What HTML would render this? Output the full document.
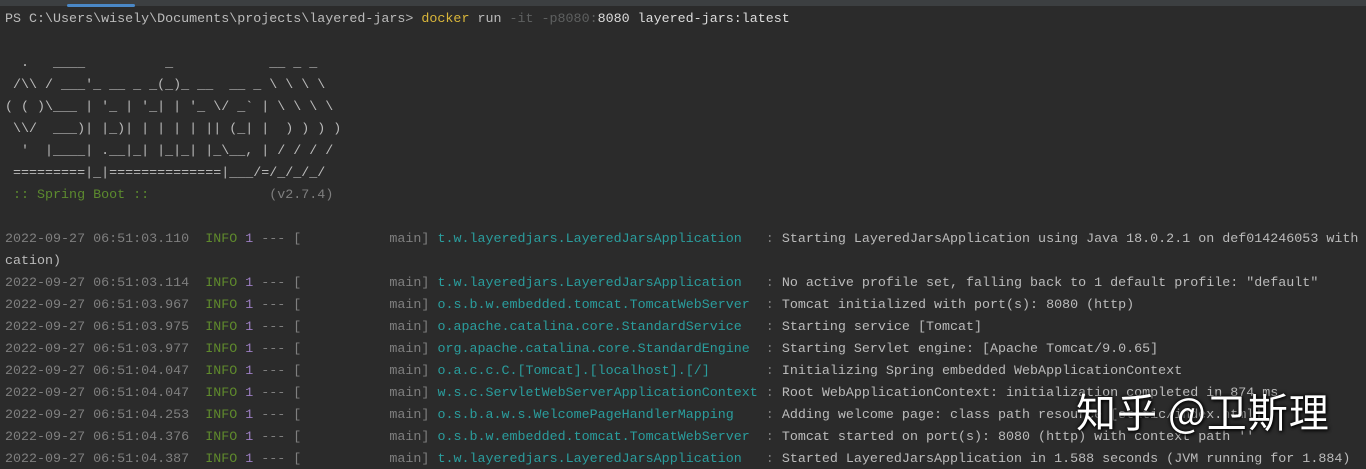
<!DOCTYPE html>
<html><head><meta charset="utf-8"><style>
html,body{margin:0;padding:0;background:#2b2b2b;width:1366px;height:469px;overflow:hidden;position:relative}
.top{position:absolute;left:0;top:0;width:1366px;height:6px;background:#3c3f41}
.tab{position:absolute;left:67px;top:4px;width:68px;height:3px;background:#4a88c7;border-radius:2px}
pre{position:absolute;left:5px;top:9px;margin:0;font-family:"Liberation Mono",monospace;font-size:13.35px;line-height:22px;color:#bbbbbb;white-space:pre}
.g{color:#7f7f7f}.y{color:#d9b63a}.i{color:#5f8a2c}.p{color:#9d7fc4}.c{color:#2a9d9d}.sb{color:#5c8a2e}.d{color:#5e6060}
.wm{position:absolute;left:1076px;top:382px;font-family:"Noto Sans CJK SC",sans-serif;font-size:40px;color:#fff;text-shadow:0 0 4px #000,1px 1px 3px #000;line-height:56px;letter-spacing:1px}
</style></head><body>
<div class="top"></div><div class="tab"></div>
<pre>PS C:\Users\wisely\Documents\projects\layered-jars&gt; <span class="y">docker</span> run <span class="d">-it -p8080:</span><span style="color:#ddd">8080 layered-jars:latest</span>

  .   ____          _            __ _ _
 /\\ / ___'_ __ _ _(_)_ __  __ _ \ \ \ \
( ( )\___ | '_ | '_| | '_ \/ _` | \ \ \ \
 \\/  ___)| |_)| | | | | || (_| |  ) ) ) )
  '  |____| .__|_| |_|_| |_\__, | / / / /
 =========|_|==============|___/=/_/_/_/
<span class="sb"> :: Spring Boot :: </span><span class="g">              (v2.7.4)</span>

<span class="g">2022-09-27 06:51:03.110 </span> <span class="i">INFO</span> <span class="p">1</span> <span class="g">--- [           main]</span> <span class="c">t.w.layeredjars.LayeredJarsApplication  </span> <span class="g">:</span> Starting LayeredJarsApplication using Java 18.0.2.1 on def014246053 with
cation)
<span class="g">2022-09-27 06:51:03.114 </span> <span class="i">INFO</span> <span class="p">1</span> <span class="g">--- [           main]</span> <span class="c">t.w.layeredjars.LayeredJarsApplication  </span> <span class="g">:</span> No active profile set, falling back to 1 default profile: "default"
<span class="g">2022-09-27 06:51:03.967 </span> <span class="i">INFO</span> <span class="p">1</span> <span class="g">--- [           main]</span> <span class="c">o.s.b.w.embedded.tomcat.TomcatWebServer </span> <span class="g">:</span> Tomcat initialized with port(s): 8080 (http)
<span class="g">2022-09-27 06:51:03.975 </span> <span class="i">INFO</span> <span class="p">1</span> <span class="g">--- [           main]</span> <span class="c">o.apache.catalina.core.StandardService  </span> <span class="g">:</span> Starting service [Tomcat]
<span class="g">2022-09-27 06:51:03.977 </span> <span class="i">INFO</span> <span class="p">1</span> <span class="g">--- [           main]</span> <span class="c">org.apache.catalina.core.StandardEngine </span> <span class="g">:</span> Starting Servlet engine: [Apache Tomcat/9.0.65]
<span class="g">2022-09-27 06:51:04.047 </span> <span class="i">INFO</span> <span class="p">1</span> <span class="g">--- [           main]</span> <span class="c">o.a.c.c.C.[Tomcat].[localhost].[/]      </span> <span class="g">:</span> Initializing Spring embedded WebApplicationContext
<span class="g">2022-09-27 06:51:04.047 </span> <span class="i">INFO</span> <span class="p">1</span> <span class="g">--- [           main]</span> <span class="c">w.s.c.ServletWebServerApplicationContext</span> <span class="g">:</span> Root WebApplicationContext: initialization completed in 874 ms
<span class="g">2022-09-27 06:51:04.253 </span> <span class="i">INFO</span> <span class="p">1</span> <span class="g">--- [           main]</span> <span class="c">o.s.b.a.w.s.WelcomePageHandlerMapping   </span> <span class="g">:</span> Adding welcome page: class path resource [static/index.html]
<span class="g">2022-09-27 06:51:04.376 </span> <span class="i">INFO</span> <span class="p">1</span> <span class="g">--- [           main]</span> <span class="c">o.s.b.w.embedded.tomcat.TomcatWebServer </span> <span class="g">:</span> Tomcat started on port(s): 8080 (http) with context path ''
<span class="g">2022-09-27 06:51:04.387 </span> <span class="i">INFO</span> <span class="p">1</span> <span class="g">--- [           main]</span> <span class="c">t.w.layeredjars.LayeredJarsApplication  </span> <span class="g">:</span> Started LayeredJarsApplication in 1.588 seconds (JVM running for 1.884)</pre>
<div class="wm">知乎 @卫斯理</div>
</body></html>
